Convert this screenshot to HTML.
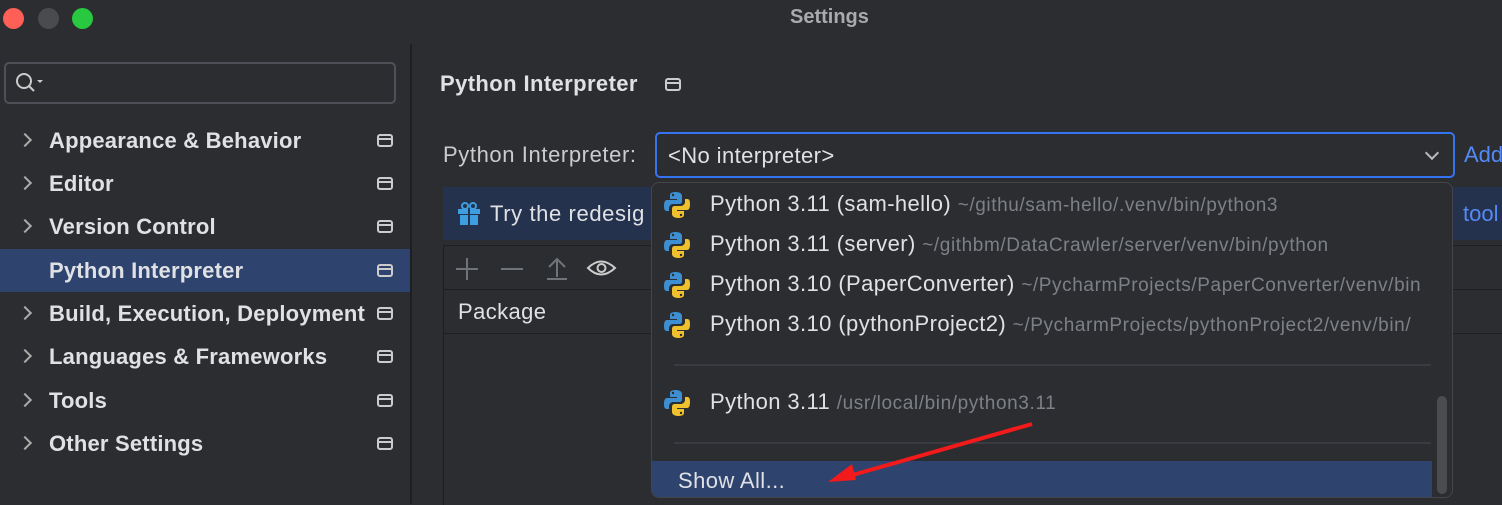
<!DOCTYPE html><html><head><style>
body{margin:0;width:1502px;height:504px;background:#2b2d30;font-family:"Liberation Sans",sans-serif;overflow:hidden;position:relative;color:#dfe1e5}
.a{position:absolute;white-space:nowrap}
.dot{position:absolute;top:8px;width:21px;height:21px;border-radius:50%}
.side{font-size:22px;font-weight:bold;color:#dfe1e5;letter-spacing:0.2px}
.chev{position:absolute;left:20px;width:8px;height:8px;border-right:2px solid #aaa;border-top:2px solid #aaa;transform:rotate(45deg)}
.ic{position:absolute;left:377px;width:12px;height:9px;border:2px solid #ccc;border-radius:3px}
.ic:after{content:"";position:absolute;left:0;right:0;top:2px;border-top:2px solid #ccc}
.row{position:absolute;left:710px;font-size:22px;color:#dfe1e5;white-space:nowrap;letter-spacing:0.4px}
.row span{color:#7d8087;font-size:19px;letter-spacing:0.6px}
.py{position:absolute;left:664px}
</style></head><body>
<div class="dot" style="left:3px;background:#fe5f57"></div>
<div class="dot" style="left:38px;background:#4a4b4e"></div>
<div class="dot" style="left:72px;background:#28c840"></div>
<div class="a" style="left:790px;top:6px;font-size:20px;font-weight:bold;color:#a8aaae">Settings</div>
<div class="a" style="left:410px;top:44px;width:2px;height:460px;background:#1e1f22"></div>
<div class="a" style="left:4px;top:62px;width:388px;height:38px;border:2px solid #4e5157;border-radius:5px"></div>
<svg class="a" style="left:14px;top:71px" width="32" height="24"><circle cx="10" cy="10" r="7" fill="none" stroke="#ccc" stroke-width="2"/><path d="M15 15l5 5" stroke="#ccc" stroke-width="2"/><path d="M23 9h6l-3 3z" fill="#ccc"/></svg>
<div class="a" style="left:0;top:249px;width:410px;height:43px;background:#2e436e"></div>
<div class="chev" style="top:135px"></div><div class="a side" style="left:49px;top:128px">Appearance &amp; Behavior</div><div class="ic" style="top:134px"></div>
<div class="chev" style="top:178px"></div><div class="a side" style="left:49px;top:171px">Editor</div><div class="ic" style="top:177px"></div>
<div class="chev" style="top:221px"></div><div class="a side" style="left:49px;top:214px">Version Control</div><div class="ic" style="top:220px"></div>
<div class="a side" style="left:49px;top:258px">Python Interpreter</div><div class="ic" style="top:264px"></div>
<div class="chev" style="top:308px"></div><div class="a side" style="left:49px;top:301px">Build, Execution, Deployment</div><div class="ic" style="top:307px"></div>
<div class="chev" style="top:351px"></div><div class="a side" style="left:49px;top:344px">Languages &amp; Frameworks</div><div class="ic" style="top:350px"></div>
<div class="chev" style="top:395px"></div><div class="a side" style="left:49px;top:388px">Tools</div><div class="ic" style="top:394px"></div>
<div class="chev" style="top:438px"></div><div class="a side" style="left:49px;top:431px">Other Settings</div><div class="ic" style="top:437px"></div>
<div class="a" style="left:440px;top:71px;font-size:22px;font-weight:bold;letter-spacing:0.4px">Python Interpreter</div>
<div class="ic" style="left:665px;top:78px"></div>
<div class="a" style="left:443px;top:142px;font-size:22px;color:#c9cbcf;letter-spacing:0.6px">Python Interpreter:</div>
<div class="a" style="left:655px;top:132px;width:796px;height:42px;border:2px solid #3574f0;border-radius:5px;background:#2b2d30"></div>
<div class="a" style="left:668px;top:143px;font-size:22px;letter-spacing:0.4px">&lt;No interpreter&gt;</div>
<div class="a" style="left:1427px;top:148px;width:8px;height:8px;border-right:2px solid #bbb;border-bottom:2px solid #bbb;transform:rotate(45deg)"></div>
<div class="a" style="left:1464px;top:142px;font-size:22px;color:#548af7">Add</div>
<div class="a" style="left:443px;top:187px;width:1059px;height:53px;background:#25324d"></div>
<svg class="a" style="left:457px;top:202px" width="24" height="24"><rect x="1" y="7" width="22" height="5" fill="#3d9ee0"/><rect x="3" y="13" width="18" height="10" fill="#3d9ee0"/><rect x="11" y="7" width="2" height="16" fill="#25324d"/><circle cx="8" cy="4" r="3" fill="none" stroke="#3d9ee0" stroke-width="2"/><circle cx="16" cy="4" r="3" fill="none" stroke="#3d9ee0" stroke-width="2"/></svg>
<div class="a" style="left:490px;top:201px;font-size:22px;letter-spacing:0.6px">Try the redesig</div>
<div class="a" style="left:1463px;top:201px;font-size:22px;color:#548af7">tool</div>
<div class="a" style="left:443px;top:245px;width:1059px;height:259px;border-left:1px solid #1e1f22;border-top:1px solid #1e1f22"></div>
<div class="a" style="left:443px;top:289px;width:1059px;border-top:1px solid #1e1f22"></div>
<div class="a" style="left:443px;top:333px;width:1059px;border-top:1px solid #1e1f22"></div>
<svg class="a" style="left:452px;top:255px" width="170" height="26"><path d="M15 3v22M4 14h22" stroke="#6f737a" stroke-width="2"/><path d="M49 14h22" stroke="#6f737a" stroke-width="2"/><path d="M105 4v18M97 12l8-8 8 8M95 24h20" stroke="#6f737a" stroke-width="2" fill="none"/><path d="M136 13q13-13 27 0q-14 13-27 0z" stroke="#ccc" stroke-width="2" fill="none"/><circle cx="149.5" cy="13" r="4" stroke="#ccc" stroke-width="2" fill="none"/></svg>
<div class="a" style="left:458px;top:299px;font-size:22px;letter-spacing:0.4px">Package</div>
<div class="a" style="left:651px;top:182px;width:800px;height:314px;background:#2b2d30;border:1px solid #43454a;border-radius:8px;overflow:hidden">
<div class="a" style="left:0;top:278px;width:780px;height:36px;background:#2e436e"></div>
<div class="a" style="left:785px;top:213px;width:10px;height:98px;background:#4a4c50;border-radius:5px"></div>
<div class="a" style="left:22px;top:181px;width:757px;border-top:2px solid #393b40"></div>
<div class="a" style="left:22px;top:259px;width:757px;border-top:2px solid #393b40"></div>
<div class="a" style="left:26px;top:285px;font-size:22px;letter-spacing:0.4px">Show All...</div>
</div>
<svg width="0" height="0" style="position:absolute"><defs><g id="p"><path d="M12 1c-6 0-6 2-6 4v3h7v1H3c-2 0-3 2-3 6s1 5 3 5h2v-3c0-2 2-4 4-4h6c2 0 3-1 3-3V5c0-2-2-4-6-4z" fill="#3d8fd1"/><path d="M14 27c6 0 6-2 6-4v-3h-7v-1h10c2 0 3-2 3-6s-1-5-3-5h-2v3c0 2-2 4-4 4h-6c-2 0-3 1-3 3v5c0 2 2 4 6 4z" fill="#f0c12e"/><circle cx="9" cy="4" r="1.2" fill="#2b2d30"/><circle cx="17" cy="24" r="1.2" fill="#2b2d30"/></g></defs></svg>
<svg class="py" style="top:191px" width="26" height="28"><use href="#p"/></svg>
<svg class="py" style="top:231px" width="26" height="28"><use href="#p"/></svg>
<svg class="py" style="top:271px" width="26" height="28"><use href="#p"/></svg>
<svg class="py" style="top:311px" width="26" height="28"><use href="#p"/></svg>
<svg class="py" style="top:389px" width="26" height="28"><use href="#p"/></svg>
<div class="a" style="left:652px;top:183px;width:780px;height:260px;overflow:hidden">
<div class="row" style="left:58px;top:8px">Python 3.11 (sam-hello) <span>~/githu/sam-hello/.venv/bin/python3</span></div>
<div class="row" style="left:58px;top:48px">Python 3.11 (server) <span>~/githbm/DataCrawler/server/venv/bin/python</span></div>
<div class="row" style="left:58px;top:88px">Python 3.10 (PaperConverter) <span>~/PycharmProjects/PaperConverter/venv/bin</span></div>
<div class="row" style="left:58px;top:128px">Python 3.10 (pythonProject2) <span>~/PycharmProjects/pythonProject2/venv/bin/</span></div>
<div class="row" style="left:58px;top:206px">Python 3.11 <span>/usr/local/bin/python3.11</span></div>
</div>
<svg class="a" style="left:820px;top:420px" width="220" height="70"><path d="M212 4L22 58" stroke="#f21a1a" stroke-width="4"/><path d="M8 62l24-18 4 16z" fill="#f21a1a"/></svg>
</body></html>
